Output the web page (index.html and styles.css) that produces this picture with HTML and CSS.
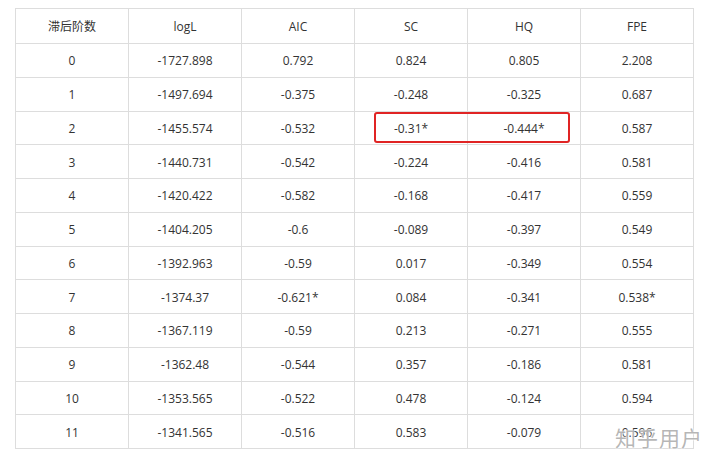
FILE: index.html
```html
<!DOCTYPE html>
<html>
<head>
<meta charset="utf-8">
<link rel="stylesheet" href="styles.css">
</head>
<body>
<div class="wrap">
<table class="lag">
<thead>
<tr><th>滞后阶数</th><th>logL</th><th>AIC</th><th>SC</th><th>HQ</th><th>FPE</th></tr>
</thead>
<tbody>
<tr><td>0</td><td>-1727.898</td><td>0.792</td><td>0.824</td><td>0.805</td><td>2.208</td></tr>
<tr><td>1</td><td>-1497.694</td><td>-0.375</td><td>-0.248</td><td>-0.325</td><td>0.687</td></tr>
<tr><td>2</td><td>-1455.574</td><td>-0.532</td><td>-0.31*</td><td>-0.444*</td><td>0.587</td></tr>
<tr><td>3</td><td>-1440.731</td><td>-0.542</td><td>-0.224</td><td>-0.416</td><td>0.581</td></tr>
<tr><td>4</td><td>-1420.422</td><td>-0.582</td><td>-0.168</td><td>-0.417</td><td>0.559</td></tr>
<tr><td>5</td><td>-1404.205</td><td>-0.6</td><td>-0.089</td><td>-0.397</td><td>0.549</td></tr>
<tr><td>6</td><td>-1392.963</td><td>-0.59</td><td>0.017</td><td>-0.349</td><td>0.554</td></tr>
<tr><td>7</td><td>-1374.37</td><td>-0.621*</td><td>0.084</td><td>-0.341</td><td>0.538*</td></tr>
<tr><td>8</td><td>-1367.119</td><td>-0.59</td><td>0.213</td><td>-0.271</td><td>0.555</td></tr>
<tr><td>9</td><td>-1362.48</td><td>-0.544</td><td>0.357</td><td>-0.186</td><td>0.581</td></tr>
<tr><td>10</td><td>-1353.565</td><td>-0.522</td><td>0.478</td><td>-0.124</td><td>0.594</td></tr>
<tr><td>11</td><td>-1341.565</td><td>-0.516</td><td>0.583</td><td>-0.079</td><td>0.596</td></tr>
</tbody>
</table>
<div class="highlight"></div>
<div class="watermark">知乎用户</div>
</div>
</body>
</html>
```
FILE: styles.css
```css
html, body {
  margin: 0;
  padding: 0;
  background: #ffffff;
}
body {
  padding: 8px 26px 0 15px;
  font-family: "Open Sans", "Noto Sans CJK SC", sans-serif;
  color: #333333;
}
.wrap {
  position: relative;
  width: 679px;
}
.lag {
  width: 679px;
  border-collapse: collapse;
  table-layout: fixed;
  font-size: 12px;
  line-height: 16px;
}
.lag th,
.lag td {
  border: 1px solid #dddddd;
  text-align: center;
  padding: 0;
  font-weight: normal;
  color: #333333;
}
.lag th {
  height: 33px;
  padding-top: 1px;
  font-family: "Open Sans", "Noto Sans CJK SC", sans-serif;
}
.lag td {
  height: 30.75px;
  padding-top: 2px;
}
.highlight {
  position: absolute;
  left: 359px;
  top: 104px;
  width: 192px;
  height: 27px;
  border: 2px solid #e02424;
  border-radius: 3px;
}
.watermark {
  position: absolute;
  left: 600px;
  top: 417px;
  font-family: "Noto Sans CJK SC", sans-serif;
  font-size: 21px;
  line-height: 24px;
  color: rgba(150, 150, 150, 0.7);
  letter-spacing: 1px;
  text-shadow: 0 0 2px #fff, 0 0 2px #fff;
  white-space: nowrap;
}
```
